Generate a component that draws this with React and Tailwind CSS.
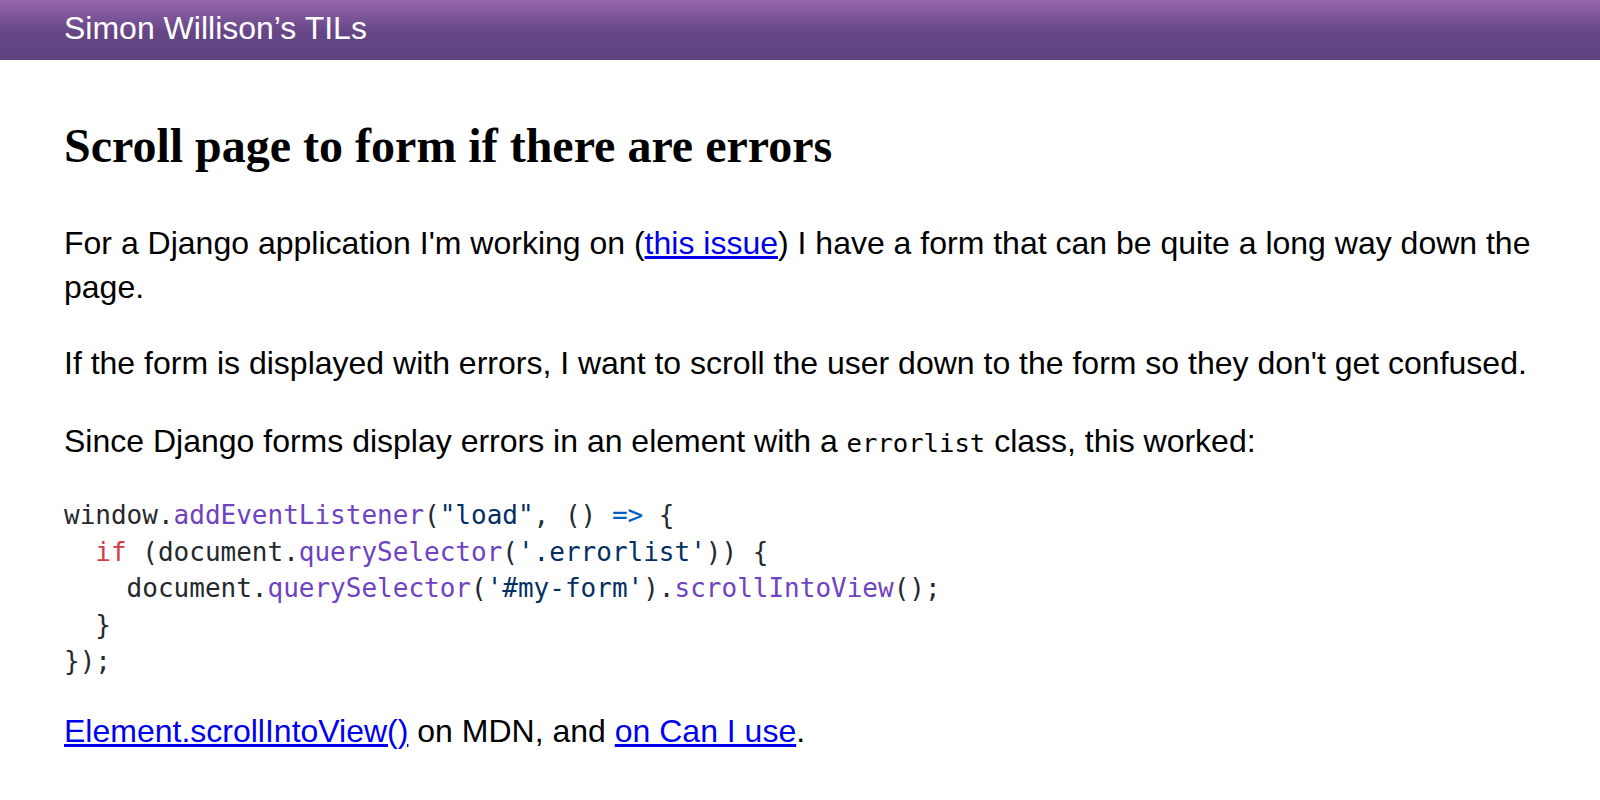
export default function App() {
  const mono = { fontFamily: '"DejaVu Sans Mono", monospace' };
  return (
    <div className="min-h-screen bg-white text-black" style={{ fontFamily: '"Liberation Sans", Arial, sans-serif' }}>
      <header className="h-[60px] flex items-center pl-16 pb-[4px] bg-[linear-gradient(to_bottom,#9767aa_0%,#7a5497_30%,#654585_55%,#5f4380_100%)]">
        <span className="text-[32px] leading-none text-white">Simon Willison’s TILs</span>
      </header>
      <main className="px-16 pt-[58px]">
        <h1 className="text-[48px] font-bold leading-[56px] mb-[47px]" style={{ fontFamily: '"Liberation Serif", "Times New Roman", serif' }}>
          Scroll page to form if there are errors
        </h1>
        <p className="text-[32px] leading-[44px] mb-[32px]">
          For a Django application I'm working on (<a href="#" className="text-[#0000ee] underline">this issue</a>) I have a form that can be quite a long way down the page.
        </p>
        <p className="text-[32px] leading-[44px] mb-[34px]">
          If the form is displayed with errors, I want to scroll the user down to the form so they don't get confused.
        </p>
        <p className="text-[32px] leading-[44px] mb-[32px]">
          Since Django forms display errors in an element with a <code className="text-[25.6px]" style={mono}>errorlist</code> class, this worked:
        </p>
        <pre className="text-[26px] leading-[36.5px] text-[#24292e] mb-[29px]" style={mono}>
{`window.`}<span className="text-[#6f42c1]">addEventListener</span>(<span className="text-[#032f62]">"load"</span>, () <span className="text-[#005cc5]">=&gt;</span>{` {
  `}<span className="text-[#d73a49]">if</span>{` (document.`}<span className="text-[#6f42c1]">querySelector</span>(<span className="text-[#032f62]">'.errorlist'</span>{`)) {
    document.`}<span className="text-[#6f42c1]">querySelector</span>(<span className="text-[#032f62]">'#my-form'</span>).<span className="text-[#6f42c1]">scrollIntoView</span>{`();
  }
});`}
        </pre>
        <p className="text-[32px] leading-[44px]">
          <a href="#" className="text-[#0000ee] underline">Element.scrollIntoView()</a> on MDN, and <a href="#" className="text-[#0000ee] underline">on Can I use</a>.
        </p>
      </main>
    </div>
  );
}
